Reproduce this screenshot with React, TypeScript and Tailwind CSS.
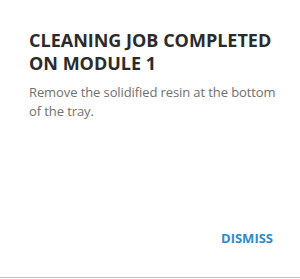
export default function App() {
  return (
    <div className="w-[300px] h-[279px] bg-white" style={{ fontFamily: '"Open Sans", sans-serif' }}>
      <div className="h-[278px] border-b border-[#c4c4c4] flex flex-col pl-[29px] pr-[24px] pt-[29px] pb-[30px]">
        <h1 className="text-[18px] leading-[23px] font-bold text-[#2b2b2b]">
          CLEANING JOB COMPLETED ON MODULE 1
        </h1>
        <p className="mt-[8px] mr-[-8px] text-[13px] leading-[19px] text-[#707070] tracking-[-0.1px]">
          Remove the solidified resin at the bottom of the tray.
        </p>
        <div className="mt-auto flex justify-end">
          <button className="text-[13px] font-bold text-[#2e8ad0] leading-[18px] mr-[3px]">DISMISS</button>
        </div>
      </div>
    </div>
  )
}
